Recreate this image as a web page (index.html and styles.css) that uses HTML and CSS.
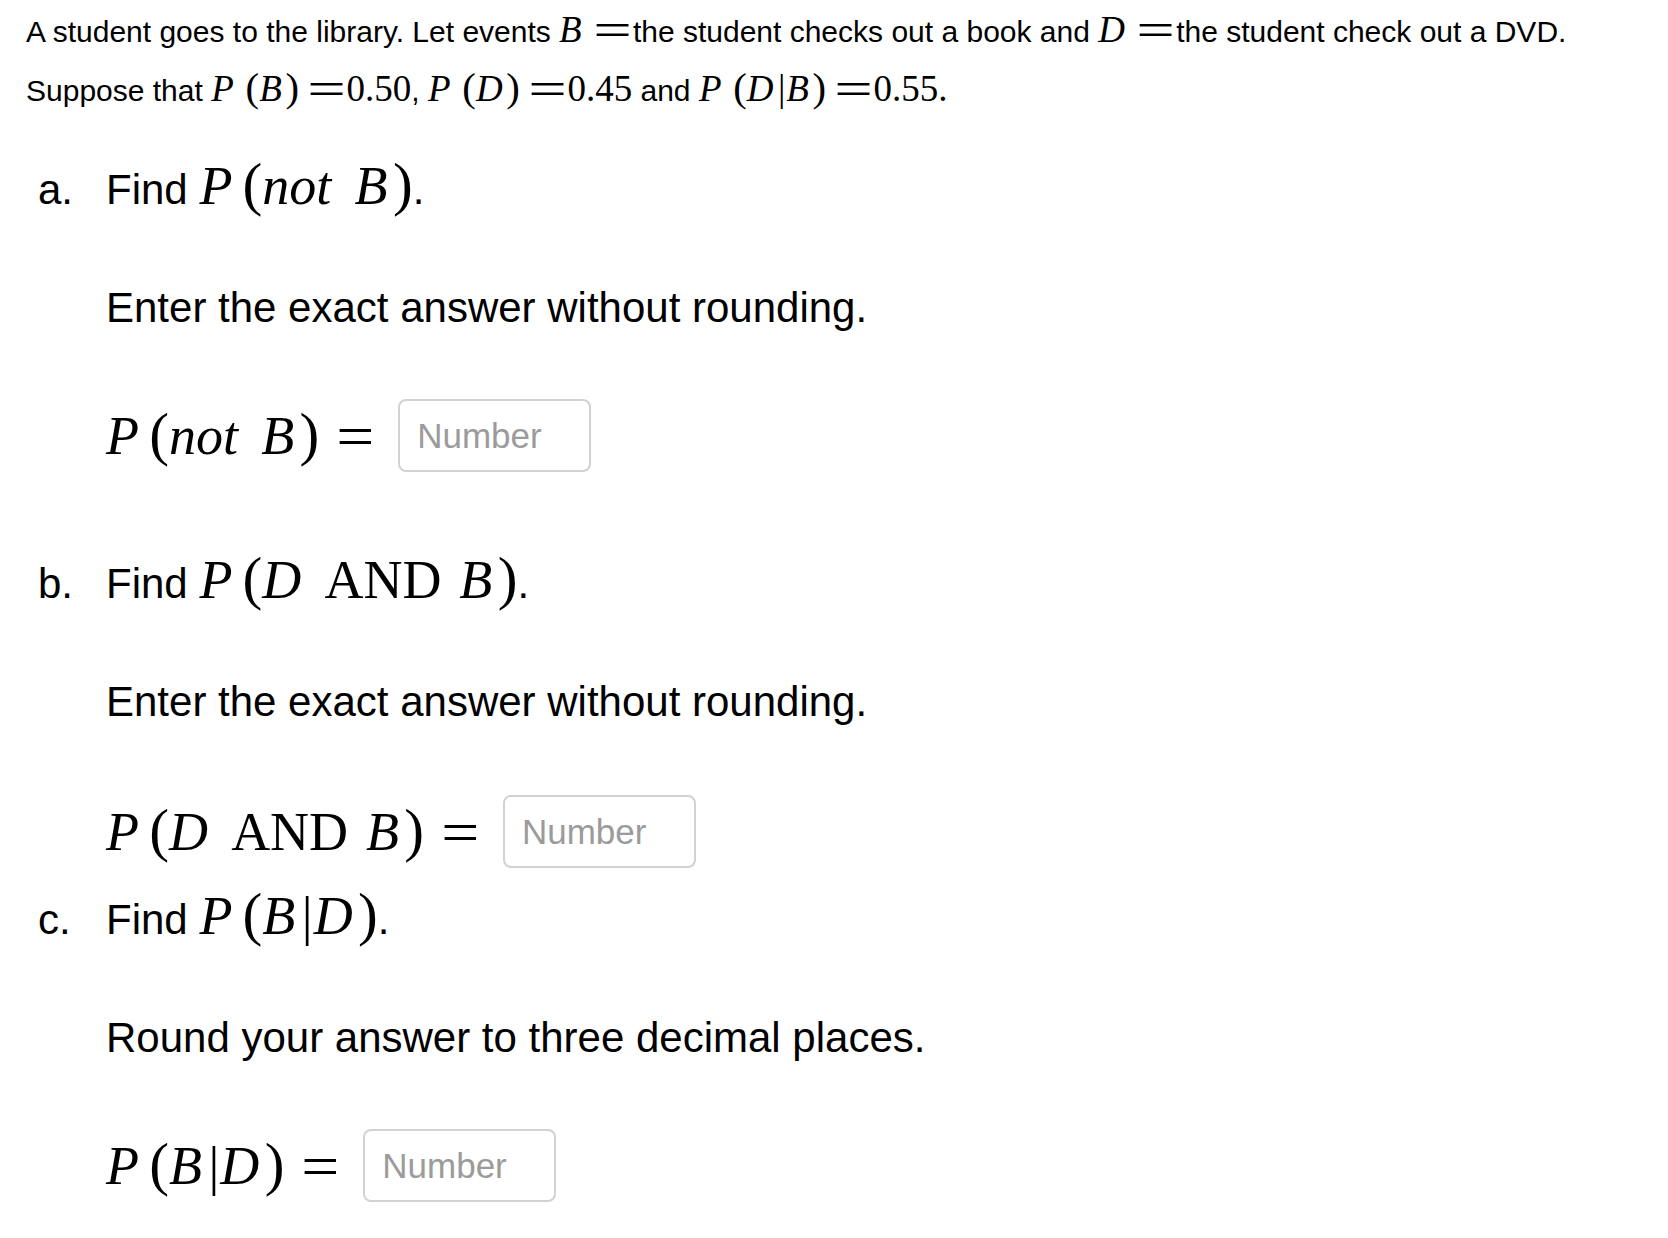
FILE: index.html
```html
<!DOCTYPE html>
<html lang="en">
<head>
<meta charset="utf-8">
<title>Library probability</title>
<link rel="stylesheet" href="styles.css">
</head>
<body>
<div class="page">
  <p class="intro">A student goes to the library. Let events <span class="m"><i>B</i><span class="rel">=</span></span>the student checks out a book and <span class="m"><i>D</i><span class="rel">=</span></span>the student check out a DVD.<br>Suppose that <span class="m"><i>P</i><span class="pl">(</span><i>B</i><span class="pr">)</span><span class="rel">=</span>0.50</span>, <span class="m"><i>P</i><span class="pl">(</span><i>D</i><span class="pr">)</span><span class="rel">=</span>0.45</span> and <span class="m"><i>P</i><span class="pl">(</span><i>D</i><span class="bar">|</span><i>B</i><span class="pr">)</span><span class="rel">=</span>0.55.</span></p>

  <div class="item">
    <div class="find"><span class="marker">a.</span>Find <span class="m mb"><i>P</i><span class="pl">(</span><i>not</i><span class="sp"></span><i>B</i><span class="pr">)</span></span>.</div>
    <div class="instr">Enter the exact answer without rounding.</div>
    <div class="answer">
      <span class="m mb"><i>P</i><span class="pl">(</span><i>not</i><span class="sp"></span><i>B</i><span class="pr">)</span><span class="rel">=</span></span>
      <input class="num" type="text" placeholder="Number">
    </div>
  </div>

  <div class="item item-b">
    <div class="find"><span class="marker">b.</span>Find <span class="m mb"><i>P</i><span class="pl">(</span><i>D</i><span class="sp"></span>AND<span class="sp"></span><i>B</i><span class="pr">)</span></span>.</div>
    <div class="instr">Enter the exact answer without rounding.</div>
    <div class="answer">
      <span class="m mb"><i>P</i><span class="pl">(</span><i>D</i><span class="sp"></span>AND<span class="sp"></span><i>B</i><span class="pr">)</span><span class="rel">=</span></span>
      <input class="num" type="text" placeholder="Number">
    </div>
  </div>

  <div class="item item-c">
    <div class="find"><span class="marker">c.</span>Find <span class="m mb"><i>P</i><span class="pl">(</span><i>B</i><span class="bar">|</span><i>D</i><span class="pr">)</span></span>.</div>
    <div class="instr">Round your answer to three decimal places.</div>
    <div class="answer">
      <span class="m mb"><i>P</i><span class="pl">(</span><i>B</i><span class="bar">|</span><i>D</i><span class="pr">)</span><span class="rel">=</span></span>
      <input class="num" type="text" placeholder="Number">
    </div>
  </div>
</div>
</body>
</html>
```

FILE: styles.css
```css
html, body {
  margin: 0;
  padding: 0;
  background: #ffffff;
}

body {
  font-family: "Liberation Sans", Arial, Helvetica, sans-serif;
  color: #000000;
}

.page {
  padding: 2px 0 40px 26px;
}

.intro {
  margin: 0;
  font-size: 30px;
  line-height: 59px;
  white-space: nowrap;
}

.m {
  font-family: "Liberation Serif", "Times New Roman", serif;
  font-size: 37px;
  line-height: 1;
  white-space: nowrap;
}

.m i {
  font-style: italic;
  padding-right: 0.1em;
}

.m .pl,
.m .pr {
  font-size: 1.1em;
}

.m .pl {
  margin-left: 0.2em;
}

.m .rel {
  display: inline-block;
  transform: scale(1.85, 1.3);
  margin: 0 0.27em 0 0.45em;
}

.m .bar {
  margin: 0 0.02em;
}

.m .sp {
  display: inline-block;
  width: 0.33em;
}

.mb {
  font-size: 54px;
}

.mb .pl {
  margin-left: 0.08em;
}

.mb .rel {
  transform: scale(1.25, 1.15);
  margin: 0 0.09em 0 0.38em;
}

.item {
  padding-left: 12px;
}

.find {
  margin-top: 40px;
  font-size: 42px;
  line-height: 60px;
}

.find .m {
  line-height: 40px;
}

.item-b .find {
  margin-top: 82px;
}

.item-c .find {
  margin-top: 22px;
}

.marker {
  display: inline-block;
  width: 68px;
}

.instr {
  margin-top: 58px;
  padding-left: 68px;
  font-size: 42px;
  line-height: 60px;
}

.answer {
  margin-top: 61px;
  padding-left: 68px;
  display: flex;
  align-items: center;
  height: 73px;
}

.item-b .answer {
  margin-top: 63px;
}

.answer .m {
  line-height: 73px;
}

.num {
  box-sizing: border-box;
  width: 193px;
  height: 73px;
  margin: 0 0 0 23px;
  padding: 0 0 0 17px;
  border: 2px solid #d2d2d2;
  border-radius: 8px;
  font-family: "Liberation Sans", Arial, Helvetica, sans-serif;
  font-size: 35px;
  color: #000;
  background: #fff;
  outline: none;
}

.num::placeholder {
  color: #9b9b9b;
  opacity: 1;
}
```
